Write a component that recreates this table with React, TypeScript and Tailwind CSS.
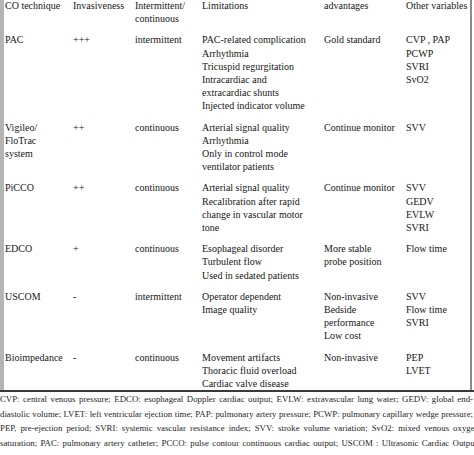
const rows: string[][][] = [
  [
    ["PAC"],
    ["+++"],
    ["intermittent"],
    [
      "PAC-related complication",
      "Arrhythmia",
      "Tricuspid regurgitation",
      "Intracardiac and",
      "extracardiac shunts",
      "Injected indicator volume",
    ],
    ["Gold standard"],
    ["CVP , PAP", "PCWP", "SVRI", "SvO2"],
  ],
  [
    ["Vigileo/", "FloTrac", "system"],
    ["++"],
    ["continuous"],
    ["Arterial signal quality", "Arrhythmia", "Only in control mode", "ventilator patients"],
    ["Continue monitor"],
    ["SVV"],
  ],
  [
    ["PiCCO"],
    ["++"],
    ["continuous"],
    ["Arterial signal quality", "Recalibration after rapid", "change in vascular motor", "tone"],
    ["Continue monitor"],
    ["SVV", "GEDV", "EVLW", "SVRI"],
  ],
  [
    ["EDCO"],
    ["+"],
    ["continuous"],
    ["Esophageal disorder", "Turbulent flow", "Used in sedated patients"],
    ["More stable", "probe position"],
    ["Flow time"],
  ],
  [
    ["USCOM"],
    ["-"],
    ["intermittent"],
    ["Operator dependent", "Image quality"],
    ["Non-invasive", "Bedside", "performance", "Low cost"],
    ["SVV", "Flow time", "SVRI"],
  ],
  [
    ["Bioimpedance"],
    ["-"],
    ["continuous"],
    ["Movement artifacts", "Thoracic fluid overload", "Cardiac valve disease"],
    ["Non-invasive"],
    ["PEP", "LVET"],
  ],
];

const header: string[][] = [
  ["CO technique"],
  ["Invasiveness"],
  ["Intermittent/", "continuous"],
  ["Limitations"],
  ["advantages"],
  ["Other variables"],
];

// footnote lines: the last two run a little past the right edge, as in the scan
const notes = [
  { text: "CVP: central venous pressure; EDCO: esophageal Doppler cardiac output; EVLW: extravascular lung water; GEDV: global end-", w: "w-[473px]" },
  { text: "diastolic volume; LVET: left ventricular ejection time; PAP: pulmonary artery pressure; PCWP: pulmonary capillary wedge pressure;", w: "w-[473px]" },
  { text: "PEP, pre-ejection period; SVRI: systemic vascular resistance index; SVV: stroke volume variation; SvO2: mixed venous oxygen", w: "w-[479px]" },
  { text: "saturation; PAC: pulmonary artery catheter; PCCO: pulse contour continuous cardiac output; USCOM : Ultrasonic Cardiac Output", w: "w-[477px]" },
];

function Row({ cells, last }: { cells: string[][]; last?: boolean }) {
  return (
    <div className={`grid grid-cols-[68px_62px_67px_122px_82px_1fr] ${last ? "" : "pb-2"}`}>
      {cells.map((lines, i) => (
        <div key={i}>
          {lines.map((l, j) => (
            <div key={j} className="whitespace-nowrap">
              {l}
            </div>
          ))}
        </div>
      ))}
    </div>
  );
}

export default function App() {
  return (
    <div className="w-[474px] h-[455px] overflow-hidden bg-white text-[#161616] [font-family:'Liberation_Serif',serif]">
      <div className="w-[472px] -mt-px border-l-4 border-r-2 border-l-[#b4b4b4] border-r-[#8c8c8c] pl-[1px] text-[10px] leading-[13.2px]">
        <Row cells={header} />
        {rows.map((r, i) => (
          <Row key={i} cells={r} last={i === rows.length - 1} />
        ))}
      </div>
      <div className="h-[2px] bg-[#3a3a3a]" />
      <div className="text-[8.8px] leading-[14.6px] text-[#262626]">
        {notes.map((n, i) => (
          <div key={i} className={`whitespace-nowrap text-justify [text-align-last:justify] ${n.w}`}>
            {n.text}
          </div>
        ))}
        <div>Monitor</div>
      </div>
    </div>
  );
}
